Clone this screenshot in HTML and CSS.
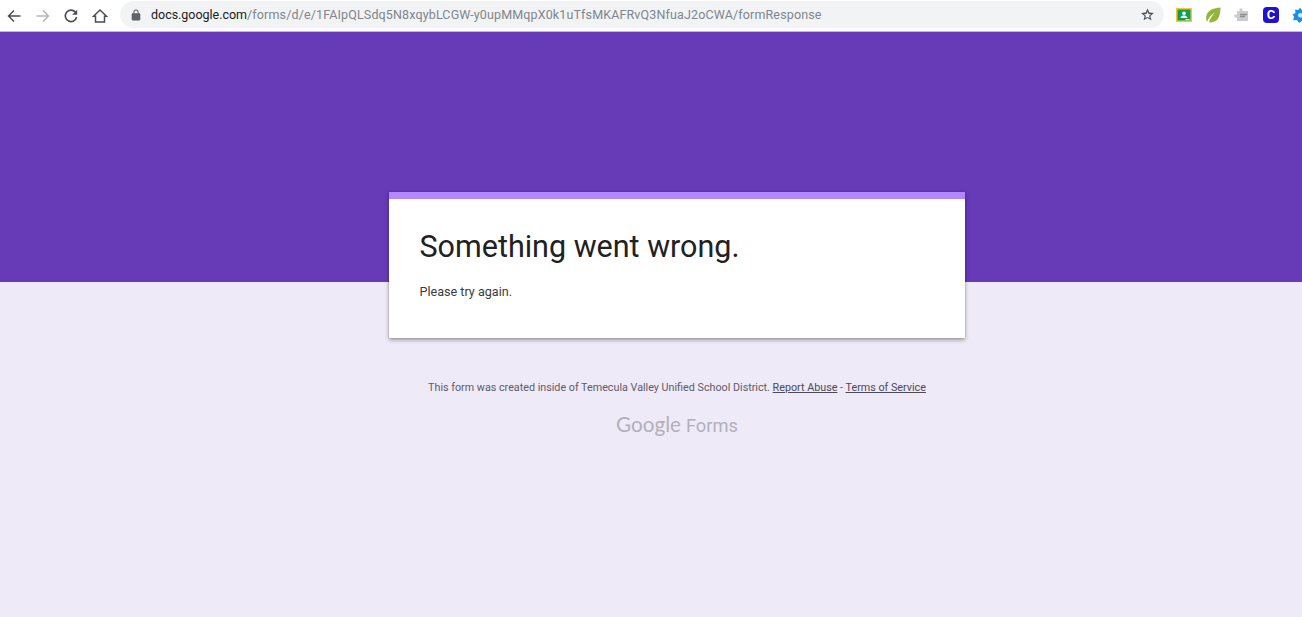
FILE: index.html
```html
<!DOCTYPE html>
<html lang="en">
<head>
    <meta charset="UTF-8">
    <meta name="viewport" content="width=device-width, initial-scale=1.0">
    <title>Something went wrong</title>
    <link rel="stylesheet" href="styles.css">
</head>
<body>
    <div class="toolbar">
        <div class="nav">
            <svg class="nav-icon" viewBox="0 0 16 16"><path d="M14.500 8H2.500M8 2.500 2.500 8 8 13.500" fill="none" stroke="#4a4d51" stroke-width="1.500"/></svg>
            <svg class="nav-icon" viewBox="0 0 16 16"><path d="M1.500 8h12M8 2.500 13.500 8 8 13.500" fill="none" stroke="#b4b6b9" stroke-width="1.500"/></svg>
            <svg class="nav-icon" viewBox="0 0 16 16"><path d="M12.300 4.100A5.700 5.700 0 1 0 13.600 9" fill="none" stroke="#4a4d51" stroke-width="1.600"/><path d="M14.200 1.700v5h-5z" fill="#4a4d51"/></svg>
            <svg class="nav-icon" viewBox="0 0 16 16"><path d="M8 2 1.500 8.300h2v5.700h9V8.300h2z" fill="none" stroke="#4a4d51" stroke-width="1.500" stroke-linejoin="miter"/></svg>
        </div>
        <div class="omnibox">
            <svg class="lock" viewBox="0 0 10 12"><path d="M8.200 4.200h-.6V3a2.600 2.600 0 0 0-5.200 0v1.200h-.6C1.200 4.200.7 4.700.7 5.300v5c0 .6.500 1.100 1.100 1.100h6.400c.6 0 1.100-.5 1.100-1.100v-5c0-.6-.5-1.100-1.100-1.100zM3.400 3a1.600 1.600 0 0 1 3.200 0v1.200H3.400z" fill="#5f6368"/></svg>
            <span class="url"><span class="url-host">docs.google.com</span>/forms/d/e/1FAIpQLSdq5N8xqybLCGW-y0upMMqpX0k1uTfsMKAFRvQ3NfuaJ2oCWA/formResponse</span>
            <svg class="star" viewBox="0 0 16 16"><path d="M8 1.500l1.900 4.400 4.800.4-3.600 3.200 1.100 4.700L8 11.700l-4.200 2.500 1.100-4.700-3.600-3.200 4.800-.4zM8 4.900 6.900 7.400l-2.700.2 2.100 1.800-.7 2.700L8 10.700l2.400 1.400-.7-2.700 2.100-1.800-2.700-.2z" fill="#4a4d51" fill-rule="evenodd"/></svg>
        </div>
        <div class="extensions">
            <svg class="ext" viewBox="0 0 16 16"><rect x="0" y="1" width="16" height="14" fill="#fbc531"/><rect x="1.500" y="2.500" width="13" height="11" fill="#0f9d58"/><circle cx="8" cy="6.200" r="1.800" fill="#fff"/><path d="M4.500 11c.4-1.800 2-2.400 3.500-2.400s3.100.6 3.500 2.400z" fill="#fff"/><rect x="9.500" y="12" width="4" height="1.200" fill="#fff"/></svg>
            <svg class="ext" viewBox="0 0 16 16"><path d="M15.500 .500C9 1 2.800 2.800 1.300 9c-.5 2.100.1 4.200.7 6C3.500 10.500 6.500 7.500 10 5.500 7.500 7.800 5.300 11 4 15.300c3.500.5 7.500-.5 9.500-4.500C15 7.800 15.500 4 15.500 .500z" fill="#93b53c"/></svg>
            <svg class="ext" viewBox="0 0 16 16"><path d="M5.500 1.500h3v2.500H14v10H3v-3.500H.5v-3H3V4h2.500z" fill="#c9cbcd"/><path d="M6 7.500h7M6 9.500h5" stroke="#8d8f92" stroke-width="1.500"/></svg>
            <div class="ext-c">C</div>
            <svg class="ext" viewBox="0 0 16 16"><path d="M8 .500l2.200 3.200 3.800-.2-.6 3.700L16 9.500l-3.200 1.800.2 3.700-3.500-.8L7 16l-2-3-3.800.2.800-3.700L.500 7.500 3.500 6 3 2.500l3.300.6z" fill="#1a8fe3"/><circle cx="8.300" cy="8.300" r="2.300" fill="#cfe6f8"/></svg>
        </div>
    </div>

    <div class="page">
        <div class="banner"></div>
        <div class="card">
            <h1 class="card-title">Something went wrong.</h1>
            <p class="card-text">Please try again.</p>
        </div>
        <p class="footer-note">This form was created inside of Temecula Valley Unified School District. <a href="#">Report Abuse</a> - <a href="#">Terms of Service</a></p>
        <div class="brand"><span class="brand-google">Google</span> <span class="brand-forms">Forms</span></div>
    </div>
</body>
</html>
```

FILE: styles.css
```css
html, body {
    height: 100%;
}
body {
    margin: 0;
    overflow: hidden;
    font-family: Roboto, "Liberation Sans", sans-serif;
    background-color: #eeeaf8;
}
.toolbar {
    display: flex;
    align-items: center;
    height: 31px;
    background-color: #fff;
    border-bottom: 1px solid #c5b4dd;
}
.nav {
    display: flex;
    align-items: center;
    gap: 12.7px;
    padding-left: 6px;
    width: 120px;
    box-sizing: border-box;
    flex: none;
}
.nav-icon {
    width: 16px;
    height: 16px;
    flex: none;
}
.omnibox {
    display: flex;
    align-items: center;
    width: 1044px;
    height: 27px;
    margin-top: -2px;
    padding: 0 9px 0 11px;
    box-sizing: border-box;
    border-radius: 14px;
    background-color: #f1f3f4;
    flex: none;
}
.lock {
    width: 10px;
    height: 12px;
    flex: none;
}
.url {
    flex: 1;
    margin-left: 10px;
    font-size: 12.5px;
    letter-spacing: 0.14px;
    color: #80868b;
    white-space: nowrap;
}
.url-host {
    color: #202124;
    letter-spacing: -0.02px;
}
.star {
    width: 15px;
    height: 15px;
}
.extensions {
    display: flex;
    align-items: center;
    gap: 13px;
    margin-left: 12px;
    margin-top: -2px;
    flex: none;
}
.ext {
    width: 16px;
    height: 16px;
    flex: none;
}
.ext-c {
    width: 16px;
    height: 16px;
    border-radius: 4px;
    background-color: #2010d0;
    color: #fff;
    font-size: 13px;
    font-weight: 700;
    line-height: 16px;
    text-align: center;
    flex: none;
}
/* wider than the window: the form is centred on 677, the right side is cut off */
.page {
    display: flex;
    flex-direction: column;
    align-items: center;
    width: 1354px;
}
.banner {
    align-self: stretch;
    height: 250px;
    background-color: #673ab7;
}
.card {
    width: 576px;
    height: 146px;
    margin-top: -90px;
    padding: 32px 30px 0 30.5px;
    box-sizing: border-box;
    border-top: 7px solid #b388ff;
    background-color: #fff;
    box-shadow: 0 2px 4px rgba(0, 0, 0, 0.35), 0 0 2px rgba(0, 0, 0, 0.15);
}
.card-title {
    margin: 0;
    font-size: 30.5px;
    font-weight: 400;
    line-height: 32px;
    color: #212121;
}
.card-text {
    margin: 20px 0 0;
    font-size: 12.6px;
    line-height: 17px;
    color: #3c3b40;
}
.footer-note {
    margin: 42px 0 0;
    font-size: 10.75px;
    line-height: 15px;
    color: #5f5b68;
}
.footer-note a {
    color: #4d4956;
}
.brand {
    margin-top: 16px;
    line-height: 26px;
    color: #b3b0bb;
}
.brand-google {
    font-family: Lato, Roboto, sans-serif;
    font-size: 20.7px;
}
.brand-forms {
    margin-left: 1px;
    font-size: 18.3px;
}
```
